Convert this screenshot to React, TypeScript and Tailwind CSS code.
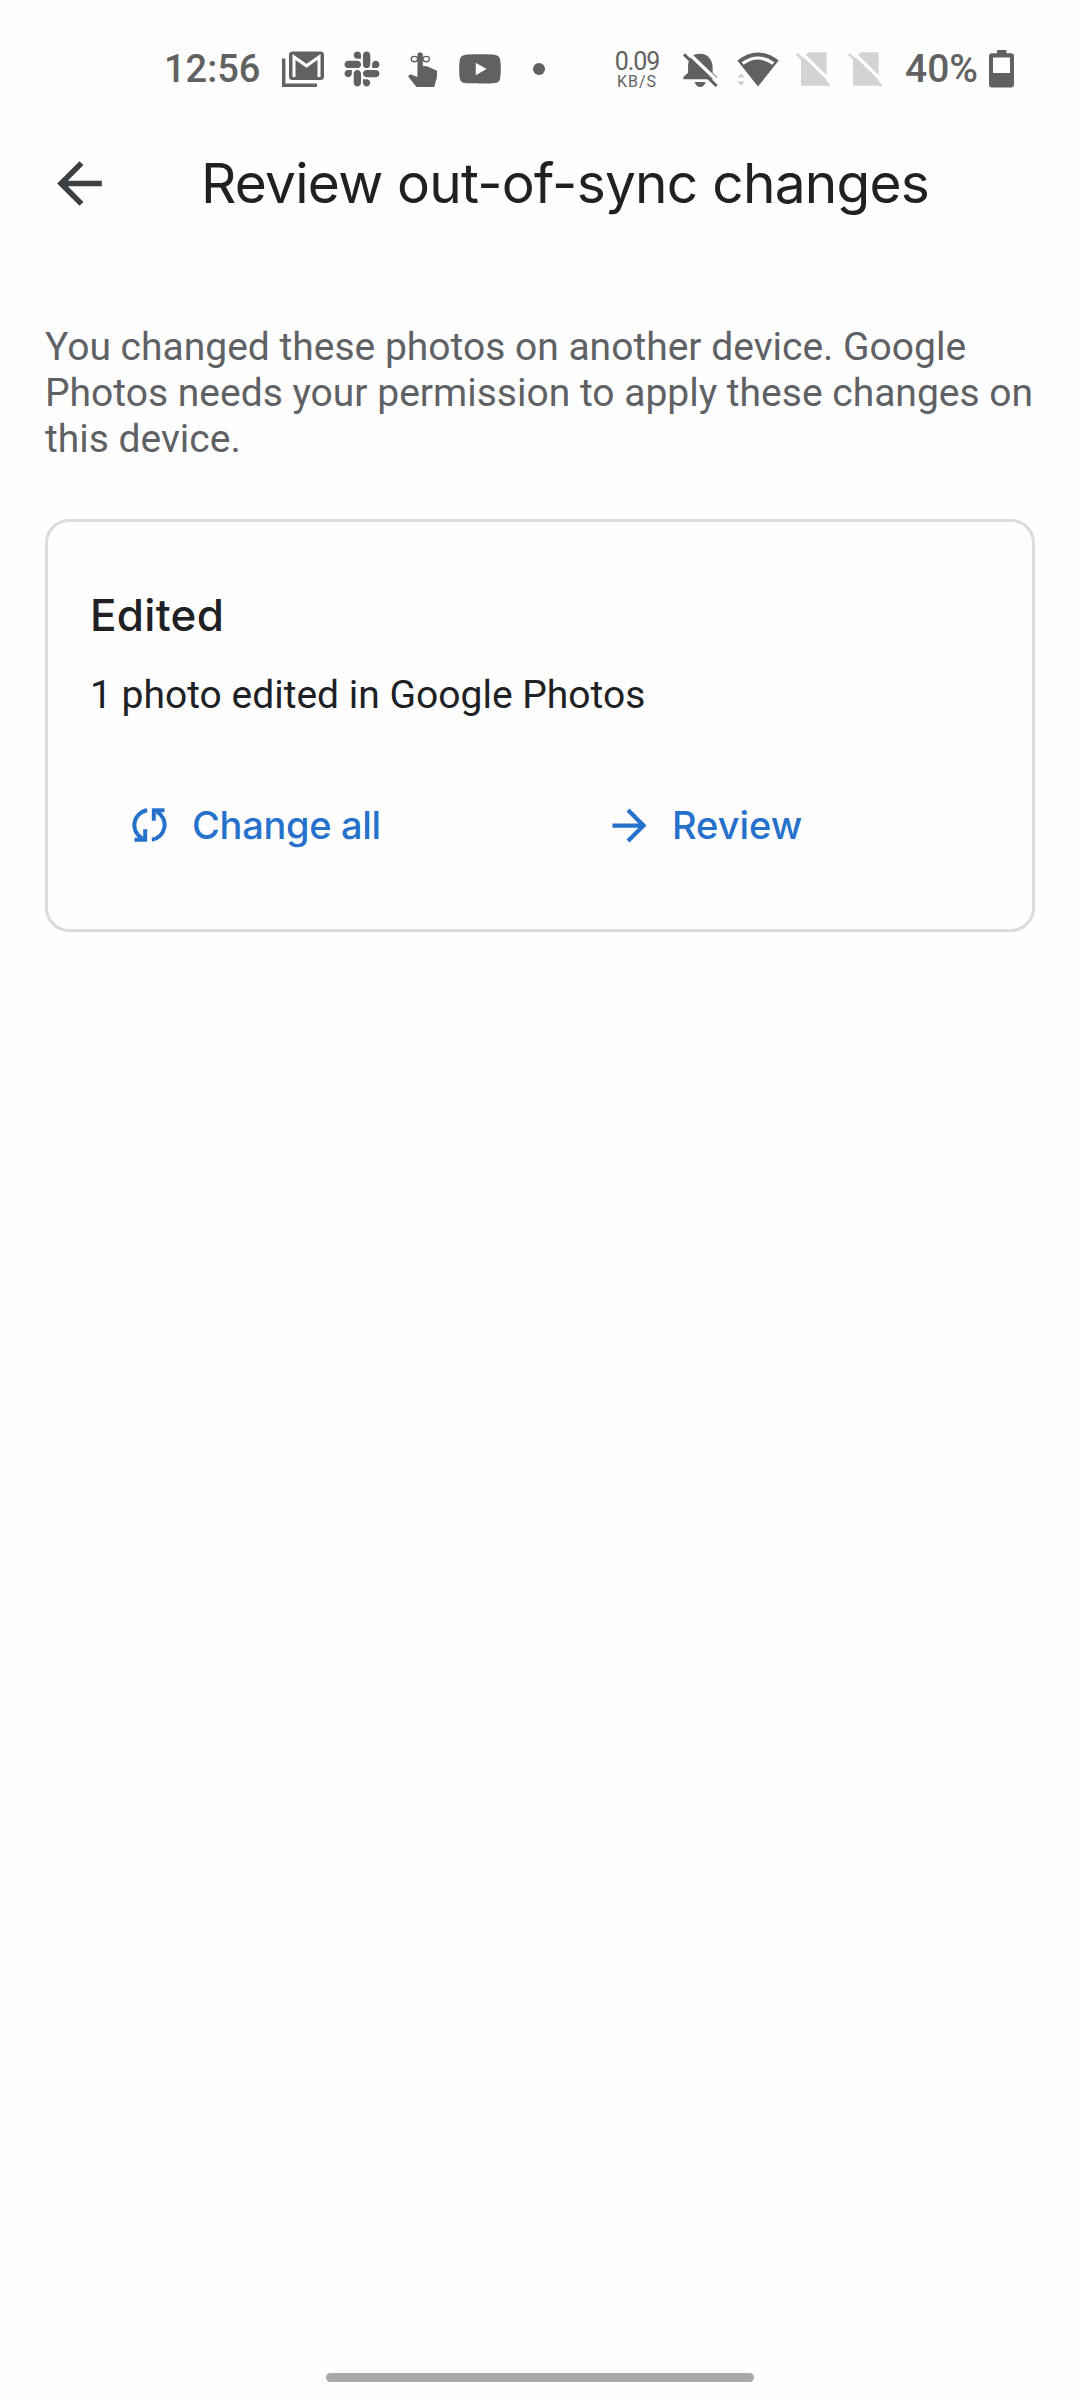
import React from 'react';
import { FaSlack, FaYoutube } from 'react-icons/fa';
import { MdArrowBack, MdArrowForward } from 'react-icons/md';

const GmailIcon = () => (
  <svg viewBox="0 0 42 36" className="w-[42px] h-9" fill="none">
    <path d="M1.7 7.5V34.3H35" stroke="#616161" strokeWidth="3.4" />
    <rect x="7" y="0.5" width="35" height="28.5" rx="3.5" fill="#616161" />
    <path d="M12 26V6L24.5 14.8L37 6V26" stroke="white" strokeWidth="3" />
  </svg>
);

const ReminderIcon = () => (
  <svg viewBox="55 50 86 104" className="w-[29px] h-[35px]">
    <path d="M83 56Q91 46 99 56V91L113 93L141 106V124L133 154H80L55 122L62 116L83 124Z" fill="#616161" />
    <ellipse cx="74" cy="71" rx="9.5" ry="8" fill="none" stroke="#616161" strokeWidth="4" />
    <ellipse cx="109" cy="71" rx="9.5" ry="8" fill="none" stroke="#616161" strokeWidth="4" />
  </svg>
);

const BellOffIcon = () => (
  <svg viewBox="249 50 104 104" className="w-[35px] h-[35px]">
    <path d="M250 131V124L264 112V92C264 72 275 59 290 56C318 50 337 70 337 95V112L350 124V131Z" fill="#616161" />
    <path d="M284 139H316Q312 154 300 154Q288 154 284 139Z" fill="#616161" />
    <path d="M261 49L360 144" stroke="white" strokeWidth="10" />
    <path d="M252 57L349 151" stroke="#616161" strokeWidth="9" />
  </svg>
);

const WifiIcon = () => (
  <svg viewBox="411 51 126 104" className="w-[42px] h-[35px]">
    <path d="M412 76Q474 28 536 76L474 154Z" fill="#616161" />
    <path d="M425 81Q474 47 523 81L517 89Q474 57 431 89Z" fill="white" />
    <path d="M412 127L423 114L434 127ZM412 138H434L423 152Z" fill="#cfcfcf" />
  </svg>
);

const NoSimIcon = () => (
  <svg viewBox="145 53 102 105" className="w-[34px] h-[35px]">
    <path d="M160 154V77L183 54H237V154Z" fill="#d3d3d3" />
    <path d="M156 50L256 148" stroke="white" strokeWidth="10" />
    <path d="M148 59L245 155" stroke="#d3d3d3" strokeWidth="8" />
  </svg>
);

const BatteryIcon = () => (
  <svg viewBox="0 0 25 38" className="w-[25px] h-[38px]">
    <path d="M8 3.3V1Q8 0 9 0H16.500Q17.500 0 17.500 1V3.300H22Q25 3.300 25 6.300V34.500Q25 37.500 22 37.500H3Q0 37.500 0 34.500V6.300Q0 3.300 3 3.300Z" fill="#616161" />
    <rect x="4" y="7.500" width="17" height="15.500" fill="white" />
  </svg>
);

const SyncIcon = () => (
  <svg viewBox="0 0 104 102" className="w-[35px] h-[34px]" fill="none" stroke="#2671cb" strokeWidth="12">
    <path d="M45 7A45 45 0 0 0 30 91M7 95H39V64" />
    <path d="M59 95A45 45 0 0 0 74 11M97 7H65V38" />
  </svg>
);

const StatusBar = () => (
  <div className="flex items-center h-[138px] pl-[164px] text-[#616161]">
    <span className="w-[118px] text-[38px] font-medium leading-none">12:56</span>
    <GmailIcon />
    <FaSlack size={40} className="ml-[18px]" />
    <div className="ml-[26px]"><ReminderIcon /></div>
    <FaYoutube size={44} className="ml-[21px]" />
    <div className="ml-[31px] w-3 h-3 rounded-full bg-[#616161]" />
    <div className="ml-[69px] w-[46px] flex flex-col items-center">
      <span className="text-[25px] leading-[26px] tracking-[-1px]">0.09</span>
      <span className="text-[16px] leading-[14px] tracking-[1px]">KB/S</span>
    </div>
    <div className="ml-[23px]"><BellOffIcon /></div>
    <div className="ml-[19px]"><WifiIcon /></div>
    <div className="ml-[17px]"><NoSimIcon /></div>
    <div className="ml-[18px]"><NoSimIcon /></div>
    <span className="ml-[23px] w-[84px] text-[39px] font-medium leading-none">40%</span>
    <BatteryIcon />
  </div>
);

export default function App() {
  return (
    <div className="w-[1080px] h-[2400px] bg-[#fefefe] flex flex-col overflow-hidden font-[Roboto,sans-serif]">
      <StatusBar />

      <header className="flex items-center h-[90px] pl-[46px]">
        <MdArrowBack size={67} color="#3c4043" />
        <h1 className="ml-[88px] font-[Inter,sans-serif] text-[55px] leading-none text-[#202124] tracking-[-0.750px] whitespace-nowrap">
          Review out-of-sync changes
        </h1>
      </header>

      <main className="px-[45px] pt-[96px]">
        <p className="text-[39px] leading-[46px] text-[#5f6165] whitespace-nowrap">
          You changed these photos on another device. Google<br />
          Photos needs your permission to apply these changes on<br />
          this device.
        </p>

        {/* Edited card */}
        <section className="mt-[57px] h-[413px] rounded-3xl border-3 border-[#dcdcdc] px-[42px] pt-[66px]">
          <h2 className="font-[Inter,sans-serif] text-[44px] leading-[54px] font-medium tracking-[0.300px] text-[#202124]">Edited</h2>
          <p className="mt-[30px] text-[39px] leading-[46px] text-[#202124]">1 photo edited in Google Photos</p>

          <div className="mt-[77px] flex items-center h-[60px] pl-[42px] font-[Inter,sans-serif] text-[38px] font-medium text-[#2671cb]">
            <button className="flex items-center w-[472px]">
              <SyncIcon />
              <span className="ml-[25px] tracking-[-0.300px]">Change all</span>
            </button>
            <button className="flex items-center">
              <MdArrowForward size={51} />
              <span className="ml-[17px]">Review</span>
            </button>
          </div>
        </section>
      </main>

      {/* Gesture bar */}
      <div className="mt-auto mb-[18px] mx-auto w-[428px] h-[9px] rounded-full bg-[#a8a8a8]" />
    </div>
  );
}
